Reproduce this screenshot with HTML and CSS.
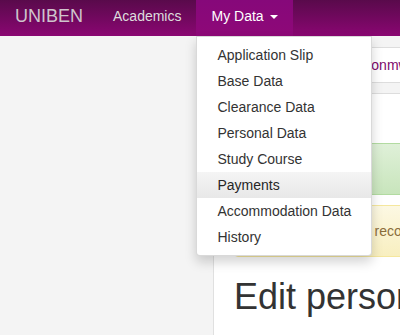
FILE: index.html
```html
<!DOCTYPE html>
<html lang="en">
<head>
    <meta charset="UTF-8">
    <meta name="viewport" content="width=device-width, initial-scale=1.0">
    <title>Edit personal data</title>
    <link rel="stylesheet" href="styles.css">
</head>
<body>
    <nav class="navbar">
        <a class="brand" href="#">UNIBEN</a>
        <ul class="nav">
            <li><a href="#">Academics</a></li>
            <li class="dropdown open">
                <a href="#">My Data <span class="caret"></span></a>
                <ul class="dropdown-menu">
                    <li><a href="#">Application Slip</a></li>
                    <li><a href="#">Base Data</a></li>
                    <li><a href="#">Clearance Data</a></li>
                    <li><a href="#">Personal Data</a></li>
                    <li><a href="#">Study Course</a></li>
                    <li class="active"><a href="#">Payments</a></li>
                    <li><a href="#">Accommodation Data</a></li>
                    <li><a href="#">History</a></li>
                </ul>
            </li>
        </ul>
    </nav>

    <div class="page">
        <aside class="sidebar"></aside>
        <main class="content">
            <div class="toolbar">
                <div class="user-box">Welcome, Ehis Osaronmwen</div>
            </div>
            <div class="inner">
                <div class="alert alert-success">Welcome back!</div>
                <div class="alert alert-warning">Please update your records before the deadline.</div>
                <h1>Edit personal data</h1>
            </div>
        </main>
    </div>
</body>
</html>
```

FILE: styles.css
```css
body {
    margin: 0;
    font-family: "Liberation Sans", Arial, sans-serif;
    font-size: 14px;
    line-height: 20px;
    color: #333;
    background: #fff;
    overflow: hidden;
}
a {
    text-decoration: none;
}
.navbar {
    display: flex;
    height: 36px;
    background: linear-gradient(to bottom, #590a4b 0%, #8a0672 100%);
    position: relative;
    z-index: 10;
}
.brand {
    padding: 6px 15px 10px;
    font-size: 18px;
    line-height: 20px;
    color: #cfc4cc;
}
.nav {
    display: flex;
    list-style: none;
    margin: 0;
    padding: 0;
}
.nav > li {
    position: relative;
}
.nav > li > a {
    display: block;
    padding: 6px 15px 10px;
    color: #ddd;
}
.nav > li.open > a {
    background: linear-gradient(to bottom, #86087a 0%, #8e0878 100%);
    color: #fff;
}
.caret {
    display: inline-block;
    width: 0;
    height: 0;
    margin-left: 2px;
    vertical-align: middle;
    border-top: 4px solid;
    border-left: 4px solid transparent;
    border-right: 4px solid transparent;
}
.dropdown-menu {
    position: absolute;
    top: 100%;
    left: 0;
    margin: 0;
    padding: 5px 0;
    list-style: none;
    min-width: 160px;
    white-space: nowrap;
    background: #fff;
    border: 1px solid rgba(0, 0, 0, .15);
    border-radius: 0 0 4px 4px;
    box-shadow: 0 6px 12px rgba(0, 0, 0, .175);
}
.dropdown-menu a {
    display: block;
    padding: 3px 20px;
    color: #333;
}
.dropdown-menu .active a {
    background: linear-gradient(to bottom, #f5f5f5 0%, #e8e8e8 100%);
    color: #262626;
}
.page {
    display: flex;
    width: 1024px;
    min-height: 299px;
}
.sidebar {
    flex: none;
    width: 213px;
    background: #f4f4f4;
    border-right: 1px solid #e0e0e0;
}
.content {
    flex: 1;
}
.toolbar {
    background: #f4f4f4;
    border-bottom: 1px solid #ddd;
    padding: 11px 20px 10px;
}
.user-box {
    background: #fff;
    border: 1px solid #ddd;
    padding: 7px 9px;
    color: #7d0a6c;
}
.inner {
    padding: 49px 20px 0;
}
.alert {
    padding: 15px;
    border: 1px solid transparent;
    border-radius: 4px;
    margin-bottom: 10px;
}
.alert-success {
    background: linear-gradient(to bottom, #dff0d8 0%, #c8e5bc 100%);
    border-color: #b2dba1;
    color: #3c763d;
}
.alert-warning {
    background: linear-gradient(to bottom, #fcf8e3 0%, #f8efc0 100%);
    border-color: #f5e79e;
    color: #8a6d3b;
}
h1 {
    margin: 20px 0;
    font-size: 36px;
    line-height: 1.1;
    font-weight: 500;
    color: #333;
}
```
